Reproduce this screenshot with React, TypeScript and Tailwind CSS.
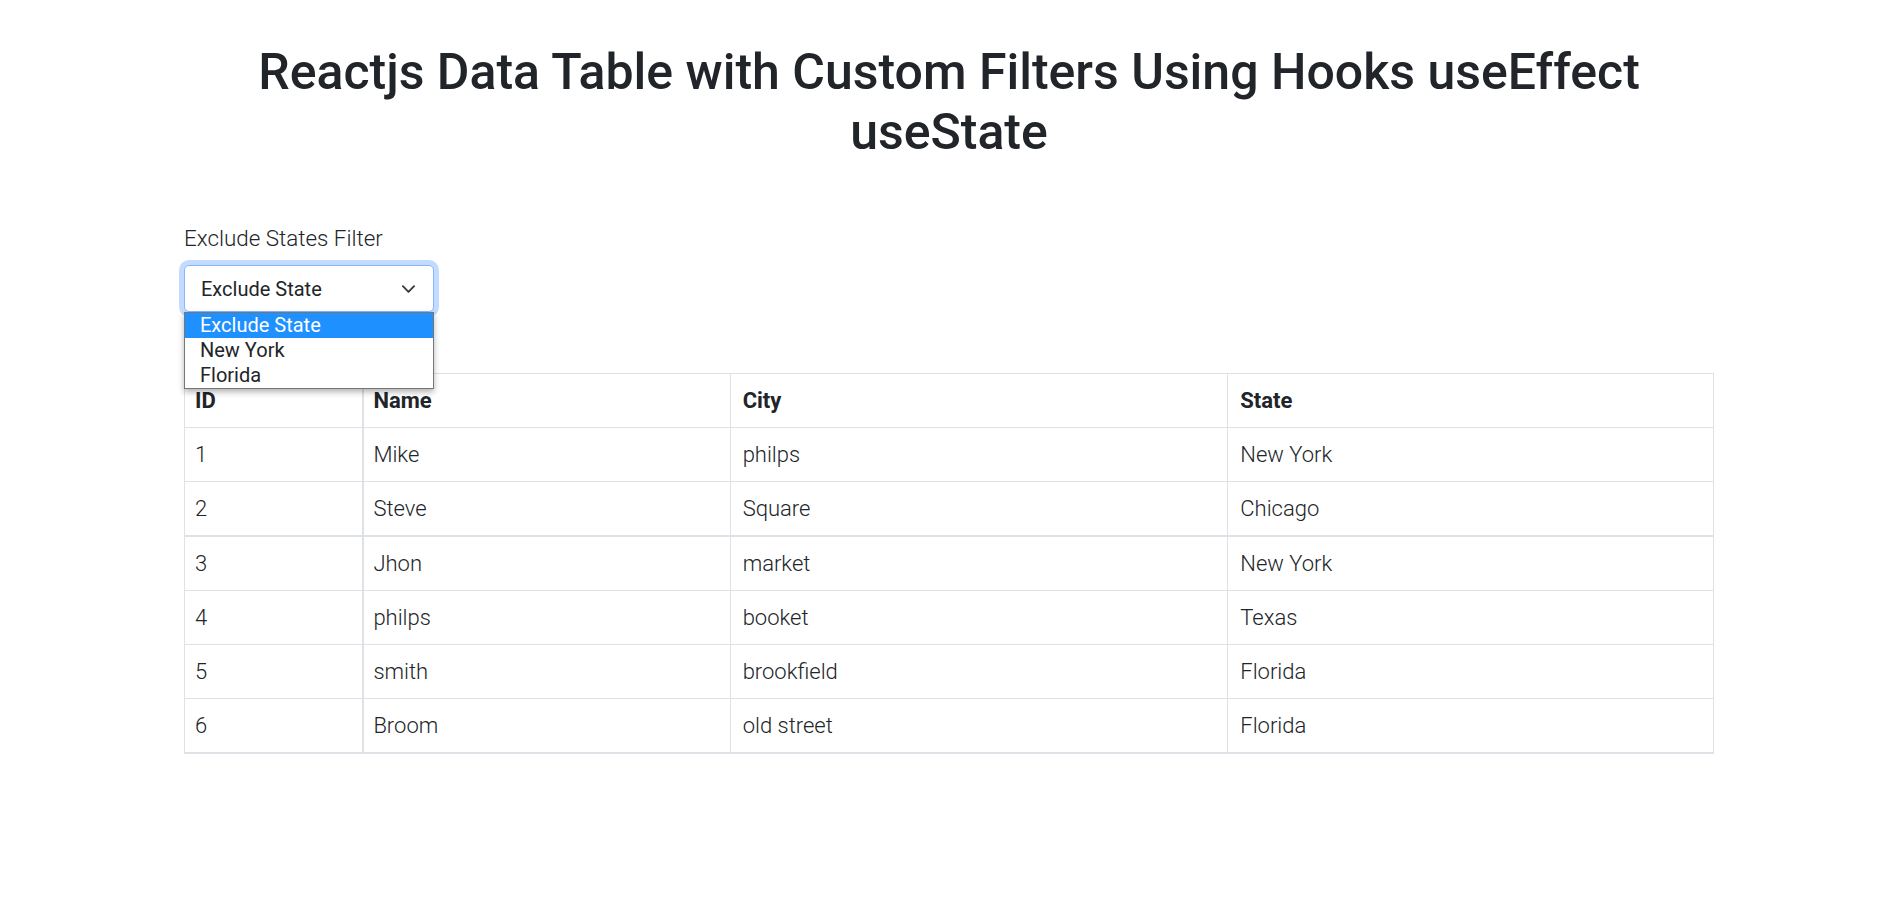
import React from "react";

const rows = [
  { id: 1, name: "Mike", city: "philps", state: "New York" },
  { id: 2, name: "Steve", city: "Square", state: "Chicago" },
  { id: 3, name: "Jhon", city: "market", state: "New York" },
  { id: 4, name: "philps", city: "booket", state: "Texas" },
  { id: 5, name: "smith", city: "brookfield", state: "Florida" },
  { id: 6, name: "Broom", city: "old street", state: "Florida" },
];

const options = ["Exclude State", "New York", "Florida"];

const cell = "border border-[#dee2e6] py-[10px]";

function App() {
  return (
    <div className="min-h-screen bg-white text-[#212529] font-['Roboto','Liberation_Sans',sans-serif]">
      <div className="ml-[184px] w-[1530px] pt-[42px]">
        <h1 className="text-center text-[50px] leading-[60px] font-medium">
          Reactjs Data Table with Custom Filters Using Hooks useEffect useState
        </h1>

        <div className="mt-[60px]">
          <p className="text-[22.4px] leading-[33px] font-light mb-[10px]">Exclude States Filter</p>
          <div className="relative w-[250px]">
            <div className="h-[47px] flex items-center justify-between pl-[16px] pr-[18px] border border-[#86b7fe] rounded-[5px] bg-white shadow-[0_0_0_5px_rgba(13,110,253,0.25)] text-[20px]">
              <span>Exclude State</span>
              <svg width="13" height="8" viewBox="0 0 14 8" fill="none">
                <path d="M1 1l6 6 6-6" stroke="#343a40" strokeWidth="2" strokeLinecap="round" strokeLinejoin="round" />
              </svg>
            </div>
            <ul className="absolute left-0 top-[47px] w-[250px] z-10 bg-white border border-[#767676] shadow-[0_3px_6px_rgba(0,0,0,0.3)] text-[20px] leading-[25px]">
              {options.map((o, i) => (
                <li key={o} className={`pl-[15px] ${i === 0 ? "bg-[#1e90ff] text-white" : "text-[#212529]"}`}>
                  {o}
                </li>
              ))}
            </ul>
          </div>
        </div>

        <table className="mt-[61px] w-[1530px] border-collapse text-[22px] leading-[33px] border-b-2 border-[#dee2e6]">
          <colgroup>
            <col className="w-[179px]" />
            <col className="w-[367px]" />
            <col className="w-[498px]" />
            <col className="w-[486px]" />
          </colgroup>
          <thead>
            <tr className="text-left font-bold">
              <th className={`${cell} border-r-2 px-[10px]`}>ID</th>
              <th className={`${cell} pl-[9px] pr-[10px]`}>Name</th>
              <th className={`${cell} px-[12px]`}>City</th>
              <th className={`${cell} px-[12px]`}>State</th>
            </tr>
          </thead>
          <tbody className="font-light">
            {rows.map((r) => (
              <tr key={r.id} className={r.id === 2 ? "border-b-2 border-[#dee2e6]" : ""}>
                <td className={`${cell} border-r-2 px-[10px]`}>{r.id}</td>
                <td className={`${cell} pl-[9px] pr-[10px]`}>{r.name}</td>
                <td className={`${cell} px-[12px]`}>{r.city}</td>
                <td className={`${cell} px-[12px]`}>{r.state}</td>
              </tr>
            ))}
          </tbody>
        </table>
      </div>
    </div>
  );
}

export default App;
